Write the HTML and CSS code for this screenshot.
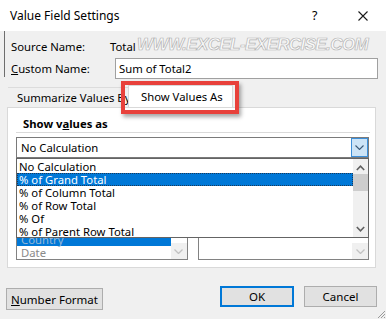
FILE: index.html
```html
<!DOCTYPE html>
<html lang="en">
<head>
  <meta charset="UTF-8" />
  <title>Value Field Settings</title>
  <link rel="stylesheet" href="styles.css">
</head>
<body>

<div class="dialog">

  <!-- Title bar -->
  <div class="titlebar">
    <div class="title">Value Field Settings</div>
    <div class="help">?</div>
    <div class="close">
      <svg width="10" height="10" viewBox="0 0 10 10">
        <path d="M0.5 0.5 L9.5 9.5 M9.5 0.5 L0.5 9.5" stroke="#1a1a1a" stroke-width="1.1" fill="none"/>
      </svg>
    </div>
  </div>

  <!-- Source / custom name -->
  <div class="fields">
    <div class="row">
      <span class="label">Source Name:</span>
      <span>Total</span>
    </div>
    <div class="row">
      <span class="label label-wide"><u>C</u>ustom Name:</span>
      <div class="textbox">Sum of Total2</div>
    </div>
  </div>

  <div class="watermark">WWW.EXCEL-EXERCISE.COM</div>

  <!-- Tabs -->
  <div class="tabs">
    <div class="tab">Summarize Values By</div>
    <div class="tab active">Show Values As</div>
  </div>
  <div class="highlight"></div>

  <div class="panel">
    <div class="section-head"><b>Show v<u>a</u>lues as</b></div>

    <div class="combo">
      <span>No Calculation</span>
      <div class="combo-btn">
        <svg width="9" height="5" viewBox="0 0 9 5">
          <path d="M0.5 0.5 L4.5 4.5 L8.5 0.5" stroke="#3c5a78" stroke-width="1.1" fill="none"/>
        </svg>
      </div>

      <!-- open dropdown list -->
      <div class="dropdown">
        <div class="options">
          <div class="option">No Calculation</div>
          <div class="option selected">% of Grand Total</div>
          <div class="option">% of Column Total</div>
          <div class="option">% of Row Total</div>
          <div class="option">% Of</div>
          <div class="option">% of Parent Row Total</div>
        </div>
        <div class="scrollbar">
          <svg width="9" height="6" viewBox="0 0 9 6">
            <path d="M0.8 5 L4.5 1.2 L8.2 5" stroke="#606060" stroke-width="1.6" fill="none"/>
          </svg>
          <div class="thumb"></div>
          <div class="spacer"></div>
          <svg width="9" height="6" viewBox="0 0 9 6">
            <path d="M0.8 1 L4.5 4.8 L8.2 1" stroke="#606060" stroke-width="1.6" fill="none"/>
          </svg>
        </div>
      </div>
    </div>

    <div class="lists">
      <div class="listbox">
        <div class="items">
          <div class="item picked">Country</div>
          <div class="item">Date</div>
        </div>
        <div class="mini-scroll">
          <svg width="9" height="5" viewBox="0 0 9 5">
            <path d="M0.5 0.5 L4.5 4.5 L8.5 0.5" stroke="#c2c2c2" stroke-width="1.3" fill="none"/>
          </svg>
        </div>
      </div>
      <div class="listbox">
        <div class="items"></div>
        <div class="mini-scroll">
          <svg width="9" height="5" viewBox="0 0 9 5">
            <path d="M0.5 0.5 L4.5 4.5 L8.5 0.5" stroke="#c2c2c2" stroke-width="1.3" fill="none"/>
          </svg>
        </div>
      </div>
    </div>
  </div>

  <!-- Buttons -->
  <div class="footer">
    <button class="btn btn-format"><u>N</u>umber Format</button>
    <button class="btn btn-ok">OK</button>
    <button class="btn btn-cancel">Cancel</button>
  </div>

  <svg class="grip" width="10" height="10" viewBox="0 0 10 10">
    <path d="M9 2 L2 9 M9 5 L5 9 M9 8 L8 9" stroke="#9a9a9a" stroke-width="1" fill="none"/>
  </svg>
</div>

</body>
</html>
```

FILE: styles.css
```css
body {
  margin: 0;
  background: #f0f0f0;
  font-family: "Noto Sans", "Open Sans", sans-serif;
  font-size: 11.3px;
  color: #000;
}
.dialog {
  position: relative;
  width: 386px;
  height: 319px;
  overflow: hidden;
}
.titlebar {
  height: 31px;
  background: #fff;
  display: flex;
  align-items: center;
  padding-left: 10px;
}
.title {
  flex: 1;
  font-size: 12px;
}
.help {
  width: 10px;
  font-size: 12.5px;
  margin-right: 36px;
}
.close {
  width: 10px;
  margin-right: 18px;
  height: 10px;
}
.close svg {
  display: block;
}
.fields {
  margin-left: 4px;
  border-left: 1px solid #6e6e6e;
  padding: 4px 0 0 6px;
  height: 42px;
}
.row {
  display: flex;
  align-items: center;
  height: 22px;
}
.label {
  width: 99px;
}
.label-wide {
  width: 104px;
}
.textbox {
  width: 258px;
  height: 19px;
  line-height: 19px;
  background: #fff;
  border: 1px solid #a0a0a0;
  padding-left: 3px;
}
.watermark {
  position: absolute;
  left: 137px;
  top: 35px;
  font-family: "Liberation Sans", sans-serif;
  font-weight: bold;
  font-style: italic;
  font-size: 17px;
  letter-spacing: -0.6px;
  color: rgba(255, 255, 255, 0.75);
  -webkit-text-stroke: 0.7px #b5b5b5;
}
.tabs {
  display: flex;
  align-items: flex-end;
  height: 22px;
  margin-top: 8px;
  padding-left: 8px;
}
.tab {
  height: 20px;
  line-height: 20px;
  width: 120px;
  padding-left: 9px;
  border-top: 1px solid #dcdcdc;
  box-sizing: border-box;
  white-space: nowrap;
  overflow: hidden;
}
.tab.active {
  width: 105px;
  height: 22px;
  line-height: 22px;
  padding-left: 12px;
  background: #fff;
  border: 1px solid #d9d9d9;
  border-bottom: none;
  position: relative;
  z-index: 1;
}
.highlight {
  position: absolute;
  left: 121px;
  top: 81px;
  width: 110px;
  height: 25px;
  border: 4px solid #e8413b;
  box-shadow: 2px 3px 4px rgba(0, 0, 0, 0.35);
  z-index: 3;
}
.panel {
  margin-left: 7px;
  width: 367px;
  height: 159px;
  background: #fff;
  border: 1px solid #d9d9d9;
}
.section-head {
  margin: 8px 5px 0 8px;
  padding-left: 7px;
  line-height: 16px;
  height: 16px;
  border-bottom: 1px solid #dadada;
}
.combo {
  position: relative;
  margin: 4px 6px 0 8px;
  height: 19px;
  border: 1px solid #7a7a7a;
  display: flex;
  align-items: center;
  padding-left: 4px;
}
.combo span {
  flex: 1;
}
.combo-btn {
  width: 15px;
  height: 17px;
  background: #cce4f7;
  border: 1px solid #3d8fd9;
  display: flex;
  align-items: center;
  justify-content: center;
}
.dropdown {
  position: absolute;
  top: 20px;
  left: -1px;
  right: -1px;
  height: 78px;
  background: #fff;
  border: 1px solid #646464;
  display: flex;
  z-index: 2;
}
.options {
  flex: 1;
  padding-top: 1px;
}
.option {
  height: 13px;
  line-height: 13px;
  padding-left: 2px;
  white-space: nowrap;
}
.option.selected {
  background: #0078d7;
  color: #fff;
  outline: 1px dotted #1a3a5a;
  outline-offset: -1px;
}
.scrollbar {
  width: 15px;
  background: #f0f0f0;
  display: flex;
  flex-direction: column;
  align-items: center;
  padding: 6px 0 5px;
}
.thumb {
  width: 15px;
  height: 17px;
  background: #cdcdcd;
  margin-top: 3px;
}
.spacer {
  flex: 1;
}
.lists {
  display: flex;
  gap: 10px;
  margin: 15px 6px 0 8px;
}
.listbox {
  flex: 1;
  height: 85px;
  border: 1px solid #828282;
  display: flex;
  align-items: flex-end;
}
.items {
  flex: 1;
  padding-bottom: 0;
  color: #8a8a8a;
}
.item {
  height: 13px;
  line-height: 13px;
  padding-left: 4px;
}
.item.picked {
  background: #0078d7;
  color: #9ab8d6;
}
.mini-scroll {
  width: 16px;
  height: 16px;
  background: #f0f0f0;
  display: flex;
  align-items: center;
  justify-content: center;
}
.footer {
  display: flex;
  align-items: flex-start;
  padding: 18px 9px 0 6px;
}
.btn {
  font-family: inherit;
  font-size: 11.5px;
  background: #e1e1e1;
  border: 1px solid #adadad;
  padding: 0;
  height: 21px;
  color: #000;
}
.btn-format {
  width: 97px;
  height: 22px;
  margin-top: 2px;
}
.btn-ok {
  margin-left: auto;
  width: 74px;
  border: 2px solid #0078d7;
}
.btn-cancel {
  width: 73px;
  margin-left: 10px;
}
.grip {
  position: absolute;
  right: 0;
  bottom: 0;
}
```
